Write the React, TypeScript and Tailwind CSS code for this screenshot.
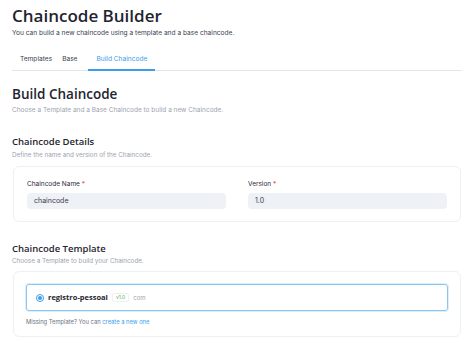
export default function App() {
  const head = { fontFamily: '"Open Sans", "Noto Sans", sans-serif' }
  return (
    <div className="w-[474px] h-[347px] overflow-hidden bg-white px-3 text-[#1f2937]" style={{ fontFamily: 'Inter, "Liberation Sans", sans-serif' }}>
      <h1 className="pt-[4px] text-[17px] leading-[24px] font-semibold text-[#1f2430]" style={head}>
        Chaincode Builder
      </h1>
      <p className="mt-[1px] text-[6.6px] leading-[9px] text-[#374151]">
        You can build a new chaincode using a template and a base chaincode.
      </p>

      <div className="mt-[17px] flex border-b border-[#e5e7eb] text-[6.6px] leading-[9px] text-[#374151]">
        <div className="px-2 pb-[6px]">Templates</div>
        <div className="px-[2px] pb-[6px]">Base</div>
        <div className="-mb-px ml-[9px] border-b-2 border-[#3b9eea] px-2 pb-[5px] text-[#3b9eea]">Build Chaincode</div>
      </div>

      <h2 className="mt-[13px] text-[13.5px] leading-[20px] font-semibold text-[#1f2430]" style={head}>
        Build Chaincode
      </h2>
      <p className="mt-[2px] text-[6.5px] leading-[9px] text-[#9ca3af]">
        Choose a Template and a Base Chaincode to build a new Chaincode.
      </p>

      <h3 className="mt-[20px] text-[9.5px] leading-[13px] font-semibold text-[#1f2430]" style={head}>
        Chaincode Details
      </h3>
      <p className="mt-[3px] text-[6.3px] leading-[9px] text-[#9ca3af]">
        Define the name and version of the Chaincode.
      </p>

      <div className="mt-[6px] mx-[1px] rounded-md border border-[#eef0f3] px-[13px] pt-[13px] pb-[12px]">
        <div className="grid grid-cols-2 gap-[22px]">
          <div>
            <div className="text-[6.5px] leading-[9px] text-[#1f2937]">
              Chaincode Name <span className="text-[#ef4444]">*</span>
            </div>
            <div className="mt-[4px] h-[16px] rounded-sm bg-[#eef1f6] px-[7px] text-[7px] leading-[16px] text-[#374151]">chaincode</div>
          </div>
          <div>
            <div className="text-[6.5px] leading-[9px] text-[#1f2937]">
              Version <span className="text-[#ef4444]">*</span>
            </div>
            <div className="mt-[4px] h-[16px] rounded-sm bg-[#eef1f6] px-[7px] text-[7px] leading-[16px] text-[#374151]">1.0</div>
          </div>
        </div>
      </div>

      <h3 className="mt-[20px] text-[9.5px] leading-[13px] font-semibold text-[#1f2430]" style={head}>
        Chaincode Template
      </h3>
      <p className="mt-[2px] text-[6.3px] leading-[9px] text-[#9ca3af]">
        Choose a Template to build your Chaincode.
      </p>

      <div className="mt-[5px] mx-[1px] rounded-md border border-[#eef0f3] px-[12px] pt-[12px] pb-[10px]">
        <div className="flex h-[27px] items-center gap-[4px] rounded-[3px] border border-[#8ec5f0] px-[9px] shadow-[0_0_0_1px_#dbeefc]">
          <span className="flex h-[8px] w-[8px] items-center justify-center rounded-full border border-[#3b9eea]">
            <span className="h-[4px] w-[4px] rounded-full bg-[#3b9eea]" />
          </span>
          <span className="text-[7.5px] font-bold text-[#1f2430]" style={head}>registro-pessoal</span>
          <span className="rounded-[2px] border border-[#eef0f3] px-[3px] text-[5px] leading-[7px] text-[#4caf50]">v1.0</span>
          <span className="text-[6px] text-[#9ca3af]">com</span>
        </div>
        <p className="mt-[6px] text-[5.8px] leading-[9px] text-[#6b7280]">
          Missing Template? You can <span className="text-[#3b9eea]">create a new one</span>
        </p>
      </div>
    </div>
  )
}
